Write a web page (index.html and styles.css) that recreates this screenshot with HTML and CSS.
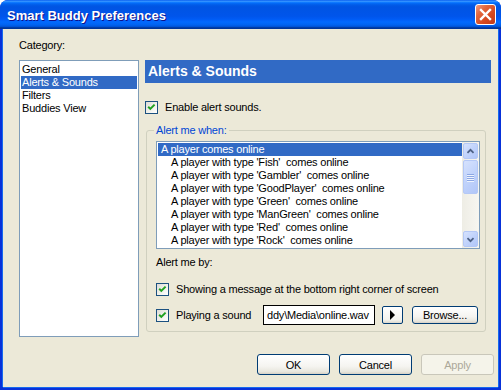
FILE: index.html
```html
<!DOCTYPE html>
<html>
<head>
<meta charset="utf-8">
<link rel="stylesheet" href="styles.css">
</head>
<body>
<div class="window">
  <div class="titlebar">
    <span class="title">Smart Buddy Preferences</span>
    <span class="close"><svg width="19" height="19" viewBox="0 0 19 19"><path d="M5 5L14 14M14 5L5 14" stroke="#fff" stroke-width="2.4" stroke-linecap="square"/></svg></span>
  </div>
  <div class="client">
    <div class="cat-label">Category:</div>
    <div class="main">
      <ul class="catlist">
        <li>General</li>
        <li class="sel">Alerts &amp; Sounds</li>
        <li>Filters</li>
        <li>Buddies View</li>
      </ul>
      <div class="panel">
        <div class="header">Alerts &amp; Sounds</div>
        <div class="row enable">
          <span class="cb"><svg width="11" height="11" viewBox="0 0 11 11"><path d="M2.2 4.8L4.3 6.9L8.6 2.6" stroke="#21A121" stroke-width="2" fill="none"/></svg></span>
          <span class="cb-text">Enable alert sounds.</span>
        </div>
        <div class="group">
          <span class="legend">Alert me when:</span>
          <div class="listbox">
            <ul class="items">
              <li class="sel">A player comes online</li>
              <li>A player with type 'Fish'  comes online</li>
              <li>A player with type 'Gambler'  comes online</li>
              <li>A player with type 'GoodPlayer'  comes online</li>
              <li>A player with type 'Green'  comes online</li>
              <li>A player with type 'ManGreen'  comes online</li>
              <li>A player with type 'Red'  comes online</li>
              <li>A player with type 'Rock'  comes online</li>
            </ul>
            <div class="vscroll">
              <span class="sbtn"><svg width="15" height="15" viewBox="0 0 15 15"><path d="M4 9L7.5 5.5L11 9" stroke="#4D6185" stroke-width="2" fill="none"/></svg></span>
              <span class="thumb"><span class="grip"></span><span class="grip"></span><span class="grip"></span><span class="grip"></span></span>
              <span class="track"></span>
              <span class="sbtn"><svg width="15" height="15" viewBox="0 0 15 15"><path d="M4 6L7.5 9.5L11 6" stroke="#4D6185" stroke-width="2" fill="none"/></svg></span>
            </div>
          </div>
          <div class="by-label">Alert me by:</div>
          <div class="row msg">
            <span class="cb"><svg width="11" height="11" viewBox="0 0 11 11"><path d="M2.2 4.8L4.3 6.9L8.6 2.6" stroke="#21A121" stroke-width="2" fill="none"/></svg></span>
            <span class="cb-text">Showing a message at the bottom right corner of screen</span>
          </div>
          <div class="row sound">
            <span class="cb"><svg width="11" height="11" viewBox="0 0 11 11"><path d="M2.2 4.8L4.3 6.9L8.6 2.6" stroke="#21A121" stroke-width="2" fill="none"/></svg></span>
            <span class="cb-text sound-label">Playing a sound</span>
            <span class="field">ddy\Media\online.wav</span>
            <span class="play"><svg width="7" height="10" viewBox="0 0 7 10"><path d="M1 0L6 5L1 10Z" fill="#000"/></svg></span>
            <span class="btn browse">Browse...</span>
          </div>
        </div>
      </div>
    </div>
    <div class="buttons">
      <span class="btn dlg">OK</span>
      <span class="btn dlg">Cancel</span>
      <span class="btn dlg disabled">Apply</span>
    </div>
  </div>
</div>
</body>
</html>
```
FILE: styles.css
```css
* { box-sizing: border-box; }
html, body { margin: 0; padding: 0; background: #fff; }
body { font-family: "Liberation Sans", Arial, sans-serif; font-size: 11px; color: #000; letter-spacing: -0.2px; }
ul { list-style: none; margin: 0; padding: 0; }

.window {
  width: 501px;
  height: 390px;
  border-radius: 8px 8px 0 0;
  background: #0831D9;
  overflow: hidden;
  display: flex;
  flex-direction: column;
}
.titlebar {
  height: 29px;
  flex: none;
  display: flex;
  align-items: center;
  padding: 0 5px 0 7px;
  background: linear-gradient(to bottom, #0058EE 0%, #3A93FF 4%, #288EFF 6%, #127DFF 8%, #036FFC 10%, #0262EE 14%, #0057E5 20%, #0054E3 24%, #0055EB 56%, #005BF5 66%, #026AFE 76%, #0062EF 86%, #0052D6 92%, #0040AB 94%, #003092 100%);
}
.title {
  flex: 1;
  color: #fff;
  font-weight: bold;
  font-size: 13px;
  letter-spacing: 0;
  text-shadow: 1px 1px #0F1089;
  padding-top: 1px;
}
.close {
  width: 21px;
  height: 21px;
  border: 1px solid #fff;
  border-radius: 3px;
  background: linear-gradient(135deg, #EE9C84 0%, #E3683F 30%, #D4481F 65%, #C03A18 100%);
  display: flex;
}
.client {
  flex: 1;
  margin: 0 3px 3px;
  background: #ECE9D8;
  padding: 10px 4px 0 16px;
  display: flex;
  flex-direction: column;
  box-shadow: -1px 0 0 #166AEE, 1px 0 0 #166AEE, 0 1px 0 #166AEE;
}
.cat-label { line-height: 13px; height: 13px; }
.main { display: flex; margin-top: 8px; height: 277px; }
.catlist {
  width: 120px;
  height: 277px;
  background: #fff;
  border: 1px solid #7F9DB9;
  padding: 2px 1px;
}
.catlist li { height: 13px; line-height: 13px; padding-left: 1px; }
.catlist li.sel, .items li.sel { background: #316AC5; color: #fff; }

.panel { margin-left: 6px; width: 346px; display: flex; flex-direction: column; }
.header {
  height: 23px;
  background: #316AC5;
  color: #fff;
  font-weight: bold;
  font-size: 14px;
  letter-spacing: 0;
  line-height: 23px;
  padding-left: 3px;
}
.row { display: flex; align-items: center; }
.enable { margin-top: 18px; height: 13px; }
.cb {
  width: 13px;
  height: 13px;
  flex: none;
  border: 1px solid #1C5180;
  background: linear-gradient(135deg, #DCDCD7 0%, #F0F0EA 50%, #FFFFFF 100%);
  display: flex;
}
.cb-text { margin-left: 7px; white-space: nowrap; line-height: 13px; }

.group {
  position: relative;
  margin-top: 16px;
  margin-left: 1px;
  width: 340px;
  height: 202px;
  border: 1px solid #D0D0BF;
  border-radius: 3px;
  padding: 10px 0 0 9px;
}
.legend {
  position: absolute;
  left: 7px;
  top: -7px;
  padding: 0 2px;
  background: #ECE9D8;
  color: #0046D5;
  line-height: 13px;
}
.listbox {
  width: 324px;
  height: 108px;
  border: 1px solid #7F9DB9;
  background: #fff;
  display: flex;
}
.items { flex: 1; padding: 1px 0 0 1px; }
.items li { height: 13px; line-height: 13px; padding-left: 13px; white-space: pre; }
.items li.sel { padding-left: 3px; }
.vscroll {
  width: 17px;
  display: flex;
  flex-direction: column;
  padding: 1px;
  background: linear-gradient(to right, #EEEDE5, #F7F6F1);
}
.sbtn, .thumb {
  height: 16px;
  border: 1px solid #B4C8F6;
  border-radius: 2px;
  background: linear-gradient(135deg, #D6E2FD 0%, #C1D3FB 50%, #B1C6F8 100%);
  display: flex;
  align-items: center;
  justify-content: center;
  flex: none;
}
.thumb {
  height: 34px;
  margin-top: 1px;
  flex-direction: column;
  gap: 1px;
}
.grip { width: 7px; height: 1px; background: #8CA7E4; box-shadow: 0 1px 0 #EEF4FE; }
.track { flex: 1; }

.by-label { margin-top: 7px; line-height: 13px; height: 13px; }
.msg { margin-top: 14px; height: 13px; }
.sound { margin-top: 9px; height: 20px; }
.sound-label { width: 87px; }
.field {
  width: 112px;
  height: 20px;
  border: 1px solid #000;
  background: #fff;
  line-height: 18px;
  padding-left: 3px;
  white-space: nowrap;
  overflow: hidden;
}
.play {
  margin-left: 7px;
  width: 21px;
  height: 18px;
  border: 1px solid #003C74;
  border-radius: 2px;
  background: linear-gradient(to bottom, #FFFFFF 0%, #F3F3EE 80%, #DCD8CC 100%);
  display: flex;
  align-items: center;
  justify-content: center;
}
.btn {
  display: flex;
  align-items: center;
  justify-content: center;
  border: 1px solid #003C74;
  border-radius: 3px;
  background: linear-gradient(to bottom, #FFFFFF 0%, #F5F4F0 60%, #E8E6DD 88%, #D6D0C5 100%);
}
.browse { margin-left: 9px; width: 66px; height: 18px; }
.buttons { display: flex; justify-content: flex-end; gap: 9px; margin-top: 17px; }
.dlg { width: 73px; height: 21px; }
.dlg.disabled {
  border-color: #C9C7BA;
  color: #ACA899;
  background: #F5F4EA;
}
```
